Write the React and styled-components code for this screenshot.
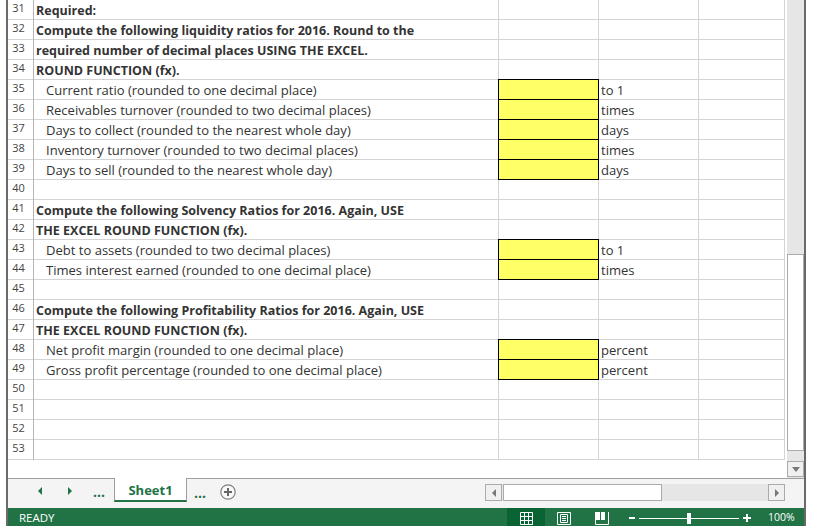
import styled, { createGlobalStyle } from "styled-components";

const GlobalStyle = createGlobalStyle`
  html, body { margin: 0; padding: 0; background: #fff; }
  body { font-family: "Open Sans", "Liberation Sans", sans-serif; overflow: hidden; }
`;

const Frame = styled.div`
  width: 796px;
  height: 526px;
  margin-left: 6px;
  border-left: 2px solid #696969;
  border-right: 2px solid #696969;
  display: flex;
  flex-direction: column;
  overflow: hidden;
`;

const Main = styled.div`
  height: 478px;
  flex: none;
  display: flex;
`;

const Sheet = styled.div`
  width: 777px;
  flex: none;
`;

const Row = styled.div`
  display: grid;
  grid-template-columns: 26px 465px 100px 100px 86px;
  height: 20px;
  box-sizing: border-box;
  border-bottom: 1px solid #d4d4d4;
`;

const RowNumber = styled.div`
  border-right: 1px solid #b5b5b5;
  margin-bottom: -1px;
  font-size: 11px;
  line-height: 16px;
  color: #444;
  text-align: center;
  padding-right: 4px;
`;

const Cell = styled.div`
  border-right: 1px solid #d4d4d4;
  margin-bottom: -1px;
  padding-left: ${(p) => (p.$indent ? 12 : 2)}px;
  font-size: ${(p) => (p.$bold ? 12.5 : 13.04)}px;
  line-height: 21px;
  font-weight: ${(p) => (p.$bold ? 700 : 400)};
  color: #333;
  white-space: nowrap;
  overflow: hidden;
`;

const InputCell = styled.div`
  background: #ffff66;
  box-sizing: border-box;
  margin: -1px 0 -1px -1px;
  height: 21px;
  border: 1px solid #000;
  ${(p) => p.$next && "border-top: none; height: 20px; margin-top: 0;"}
`;

const VScroll = styled.div`
  width: 17px;
  flex: none;
  margin-left: 2px;
  box-sizing: border-box;
  background: #e6e6e6;
  display: flex;
  flex-direction: column;
  padding-bottom: 1px;
`;

const VSpace = styled.div`
  height: 254px;
  flex: none;
`;

const VThumb = styled.div`
  flex: 1;
  margin-bottom: 10px;
  background: #fff;
  border: 1px solid #ababab;
`;

const VArrow = styled.div`
  height: 16px;
  flex: none;
  box-sizing: border-box;
  background: #f0f0f0;
  border: 1px solid #ababab;
  display: flex;
  align-items: center;
  justify-content: center;
`;

const TabBar = styled.div`
  height: 30px;
  flex: none;
  box-sizing: border-box;
  border-top: 1px solid #9e9e9e;
  background: #f4f4f4;
  display: flex;
  align-items: flex-start;
`;

const TabNav = styled.div`
  width: 106px;
  height: 24px;
  flex: none;
  display: flex;
  align-items: center;
  padding-left: 30px;
  box-sizing: border-box;
  gap: 26px;
`;

const Dots = styled.span`
  width: 14px;
  flex: none;
  font-size: 14px;
  font-weight: 700;
  color: #217346;
  line-height: 15px;
  margin: 0 0 -1px -5px;
`;

const Tab = styled.div`
  width: 71px;
  height: 19px;
  flex: none;
  background: #fff;
  border-left: 1px solid #9e9e9e;
  border-right: 1px solid #9e9e9e;
  border-bottom: 2px solid #217346;
  margin-top: -1px;
  padding-top: 3px;
  text-align: center;
  font-size: 13px;
  line-height: 19px;
  font-weight: 700;
  color: #217346;
`;

const TabTail = styled.div`
  display: flex;
  align-items: center;
  height: 26px;
  padding-left: 12px;
  gap: 12px;
  width: 0;
  flex: 1;
`;

const HScroll = styled.div`
  display: flex;
  height: 17px;
  margin: 5px 19px 0 0;
  width: 300px;
  flex: none;
  background: #e6e6e6;
`;

const HArrow = styled.div`
  width: 17px;
  flex: none;
  box-sizing: border-box;
  border: 1px solid #ababab;
  background: #f0f0f0;
  display: flex;
  align-items: center;
  justify-content: center;
`;

const HThumb = styled.div`
  width: 159px;
  flex: none;
  margin-left: 1px;
  box-sizing: border-box;
  background: #fff;
  border: 1px solid #ababab;
`;

const HSpace = styled.div`
  flex: 1;
`;

const StatusBar = styled.div`
  height: 18px;
  flex: none;
  background: #217346;
  display: flex;
  align-items: center;
  color: #fff;
  font-size: 10.5px;
`;

const Ready = styled.div`
  padding: 1px 0 0 11px;
  width: 499px;
  flex: none;
  font-size: 11.5px;
  box-sizing: border-box;
`;

const ViewButton = styled.div`
  width: 38px;
  height: 18px;
  flex: none;
  box-sizing: border-box;
  padding-top: 3px;
  display: flex;
  align-items: center;
  justify-content: center;
  background: ${(p) => (p.$active ? "#0a6332" : "transparent")};
`;

const Zoom = styled.div`
  display: flex;
  align-items: center;
  margin-left: 8px;
  padding-top: 2px;
`;

const ZoomTrack = styled.div`
  width: 100px;
  height: 1px;
  background: #fff;
  margin: 0 4px;
  position: relative;
`;

const ZoomKnob = styled.div`
  position: absolute;
  left: 48px;
  top: -5px;
  width: 4px;
  height: 11px;
  background: #fff;
`;

const ZoomSign = styled.div`
  width: ${(p) => (p.$plus ? 8 : 6)}px;
  height: 2px;
  background: #fff;
  position: relative;
  ${(p) =>
    p.$plus &&
    `&::after { content: ""; position: absolute; left: 3px; top: -3px; width: 2px; height: 8px; background: #fff; }`}
`;

const Percent = styled.div`
  margin: -2px 0 0 17px;
`;

const rows = [
  { n: 31, text: "Required:", bold: true },
  { n: 32, text: "Compute the following liquidity ratios for 2016. Round to the", bold: true },
  { n: 33, text: "required number of decimal places USING THE EXCEL.", bold: true },
  { n: 34, text: "ROUND FUNCTION (fx).", bold: true },
  { n: 35, text: "Current ratio (rounded to one decimal place)", indent: true, input: true, unit: "to 1" },
  { n: 36, text: "Receivables turnover (rounded to two decimal places)", indent: true, input: true, next: true, unit: "times" },
  { n: 37, text: "Days to collect (rounded to the nearest whole day)", indent: true, input: true, next: true, unit: "days" },
  { n: 38, text: "Inventory turnover (rounded to two decimal places)", indent: true, input: true, next: true, unit: "times" },
  { n: 39, text: "Days to sell (rounded to the nearest whole day)", indent: true, input: true, next: true, unit: "days" },
  { n: 40 },
  { n: 41, text: "Compute the following Solvency Ratios for 2016. Again, USE", bold: true },
  { n: 42, text: "THE EXCEL ROUND FUNCTION (fx).", bold: true },
  { n: 43, text: "Debt to assets (rounded to two decimal places)", indent: true, input: true, unit: "to 1" },
  { n: 44, text: "Times interest earned (rounded to one decimal place)", indent: true, input: true, next: true, unit: "times" },
  { n: 45 },
  { n: 46, text: "Compute the following Profitability Ratios for 2016. Again, USE", bold: true },
  { n: 47, text: "THE EXCEL ROUND FUNCTION (fx).", bold: true },
  { n: 48, text: "Net profit margin (rounded to one decimal place)", indent: true, input: true, unit: "percent" },
  { n: 49, text: "Gross profit percentage (rounded to one decimal place)", indent: true, input: true, next: true, unit: "percent" },
  { n: 50 },
  { n: 51 },
  { n: 52 },
  { n: 53 },
];

function Arrow({ dir, color = "#777" }) {
  if (dir === "down") {
    return (
      <svg width="8" height="5" viewBox="0 0 8 5">
        <polygon points="0,0 8,0 4,5" fill={color} />
      </svg>
    );
  }
  return (
    <svg width="4" height="8" viewBox="0 0 4 8">
      <polygon points={dir === "left" ? "4,0 0,4 4,8" : "0,0 4,4 0,8"} fill={color} />
    </svg>
  );
}

export default function App() {
  return (
    <>
      <GlobalStyle />
      <Frame>
        <Main>
          <Sheet>
            {rows.map((row) => (
              <Row key={row.n}>
                <RowNumber>{row.n}</RowNumber>
                <Cell $bold={row.bold} $indent={row.indent}>{row.text}</Cell>
                {row.input ? <InputCell $next={row.next} /> : <Cell />}
                <Cell>{row.unit}</Cell>
                <Cell />
              </Row>
            ))}
          </Sheet>
          <VScroll>
            <VSpace />
            <VThumb />
            <VArrow><Arrow dir="down" /></VArrow>
          </VScroll>
        </Main>
        <TabBar>
          <TabNav>
            <Arrow dir="left" color="#217346" />
            <Arrow dir="right" color="#217346" />
            <Dots>...</Dots>
          </TabNav>
          <Tab>Sheet1</Tab>
          <TabTail>
            <Dots>...</Dots>
            <svg width="16" height="16" viewBox="0 0 16 16" style={{ flex: "none" }}>
              <circle cx="8" cy="8" r="7.2" fill="#f8f8f8" stroke="#808080" strokeWidth="1.2" />
              <path d="M4 8h8M8 4v8" stroke="#666" strokeWidth="2" />
            </svg>
          </TabTail>
          <HScroll>
            <HArrow><Arrow dir="left" /></HArrow>
            <HThumb />
            <HSpace />
            <HArrow><Arrow dir="right" /></HArrow>
          </HScroll>
        </TabBar>
        <StatusBar>
          <Ready>READY</Ready>
          <ViewButton $active>
            <svg width="13" height="13" viewBox="0 0 13 13" fill="none" stroke="#fff">
              <path d="M.5.5h12v12H.5zM4.5.5v12M8.5.5v12M.5 4.5h12M.5 8.5h12" />
            </svg>
          </ViewButton>
          <ViewButton>
            <svg width="14" height="13" viewBox="0 0 14 13" fill="none" stroke="#fff">
              <path d="M.5.5h13v12H.5zM3.5 2.5h7v8h-7zM5 4.5h4M5 6.5h4M5 8.5h4" />
            </svg>
          </ViewButton>
          <ViewButton>
            <svg width="14" height="13" viewBox="0 0 14 13" fill="none" stroke="#fff">
              <path d="M.5.5v12h13V.5" />
              <path d="M0 0h5v8H0zM6 0h4v8H6zM13 0h1v1h-1z" fill="#fff" stroke="none" />
            </svg>
          </ViewButton>
          <Zoom>
            <ZoomSign />
            <ZoomTrack><ZoomKnob /></ZoomTrack>
            <ZoomSign $plus />
            <Percent>100%</Percent>
          </Zoom>
        </StatusBar>
      </Frame>
    </>
  );
}
